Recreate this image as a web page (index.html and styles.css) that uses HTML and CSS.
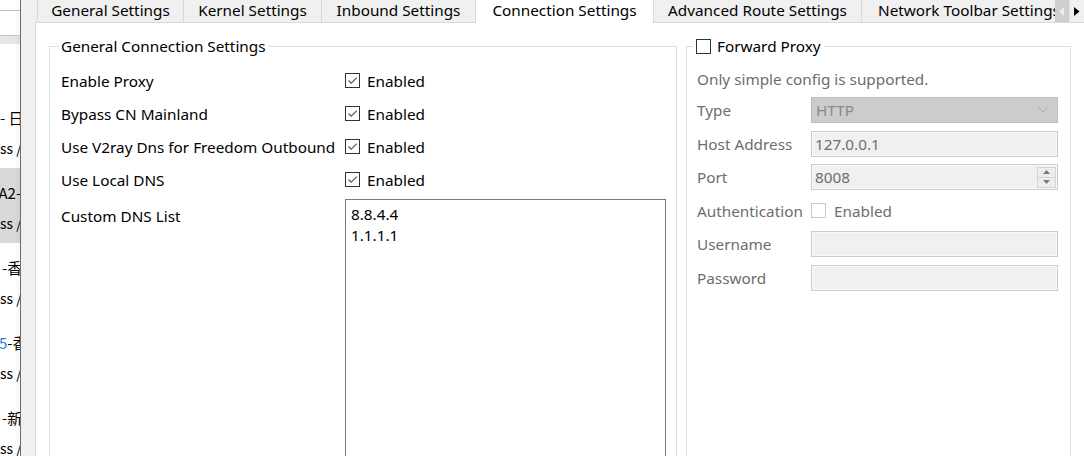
FILE: index.html
```html
<!DOCTYPE html>
<html lang="en">
<head>
<meta charset="utf-8">
<title>Connection Settings</title>
<link rel="stylesheet" href="styles.css">
</head>
<body>
<div class="app">
  <aside class="list">
    <div class="list-top"></div>
    <div class="list-gap"></div>
    <div class="list-head"></div>
    <div class="list-spacer"></div>
    <div class="item"><div class="title t1">JP- 日本</div><div class="sub">vless / tcp</div></div>
    <div class="item selected"><div class="title t2">HKA2-香港</div><div class="sub">vless / tcp</div></div>
    <div class="item"><div class="title t3">-香港</div><div class="sub">vless / tcp</div></div>
    <div class="item"><div class="title t4"><span class="blue">5</span>-香港</div><div class="sub">vless / tcp</div></div>
    <div class="item"><div class="title t3">-新加坡</div><div class="sub">vless / tcp</div></div>
  </aside>
  <div class="splitter"></div>
  <div class="gutter"></div>
  <main class="main">
    <nav class="tabbar">
      <div class="tabs">
        <div class="tab tab-general">General Settings</div>
        <div class="tab tab-kernel">Kernel Settings</div>
        <div class="tab tab-inbound">Inbound Settings</div>
        <div class="tab tab-conn active">Connection Settings</div>
        <div class="tab tab-route">Advanced Route Settings</div>
        <div class="tab tab-toolbar">Network Toolbar Settings</div>
      </div>
      <div class="scroll">
        <span class="arrow arrow-left"><svg width="6" height="9" viewBox="0 0 6 9"><path d="M5 0 L0 4.5 L5 9 Z" fill="#ececec"/></svg></span>
        <span class="arrow arrow-right"><svg width="6" height="9" viewBox="0 0 6 9"><path d="M0 0 L5.5 4.5 L0 9 Z" fill="#000"/></svg></span>
      </div>
    </nav>
    <section class="panel">
      <fieldset class="group group-conn">
        <legend class="legend">General Connection Settings</legend>
        <div class="form">
          <div class="lbl">Enable Proxy</div>
          <div class="ctl"><span class="cb checked"><svg width="13" height="13" viewBox="0 0 13 13"><path d="M2.5 6.5 L5.2 9.2 L10.8 3.6" fill="none" stroke="#555" stroke-width="1.1"/></svg></span>Enabled</div>
          <div class="lbl">Bypass CN Mainland</div>
          <div class="ctl"><span class="cb checked"><svg width="13" height="13" viewBox="0 0 13 13"><path d="M2.5 6.5 L5.2 9.2 L10.8 3.6" fill="none" stroke="#555" stroke-width="1.1"/></svg></span>Enabled</div>
          <div class="lbl">Use V2ray Dns for Freedom Outbound</div>
          <div class="ctl"><span class="cb checked"><svg width="13" height="13" viewBox="0 0 13 13"><path d="M2.5 6.5 L5.2 9.2 L10.8 3.6" fill="none" stroke="#555" stroke-width="1.1"/></svg></span>Enabled</div>
          <div class="lbl">Use Local DNS</div>
          <div class="ctl"><span class="cb checked"><svg width="13" height="13" viewBox="0 0 13 13"><path d="M2.5 6.5 L5.2 9.2 L10.8 3.6" fill="none" stroke="#555" stroke-width="1.1"/></svg></span>Enabled</div>
          <div class="lbl lbl-top">Custom DNS List</div>
          <div class="textarea">8.8.4.4<br>1.1.1.1</div>
        </div>
      </fieldset>
      <fieldset class="group group-proxy">
        <legend class="legend legend-check"><span class="cb"></span>Forward Proxy</legend>
        <div class="note">Only simple config is supported.</div>
        <div class="form2">
          <div class="lbl2">Type</div>
          <div class="combo">HTTP<svg class="chev" width="10" height="6" viewBox="0 0 10 6"><path d="M0.5 0.5 L5 5 L9.5 0.5" fill="none" stroke="#a9a9a9" stroke-width="1"/></svg></div>
          <div class="lbl2">Host Address</div>
          <div class="input">127.0.0.1</div>
          <div class="lbl2">Port</div>
          <div class="input input-spin">8008
            <span class="spin">
              <span class="spin-btn"><svg width="7" height="4" viewBox="0 0 7 4"><path d="M0 4 L3.5 0 L7 4 Z" fill="#7a7a7a"/></svg></span>
              <span class="spin-btn"><svg width="7" height="4" viewBox="0 0 7 4"><path d="M0 0 L3.5 4 L7 0 Z" fill="#7a7a7a"/></svg></span>
            </span>
          </div>
          <div class="lbl2">Authentication</div>
          <div class="ctl2"><span class="cb cb-disabled"></span>Enabled</div>
          <div class="lbl2">Username</div>
          <div class="input"></div>
          <div class="lbl2">Password</div>
          <div class="input"></div>
        </div>
      </fieldset>
    </section>
  </main>
</div>
</body>
</html>
```
FILE: styles.css
```css
* { box-sizing: border-box; }
html, body { margin: 0; padding: 0; }
body {
  width: 1084px;
  height: 456px;
  overflow: hidden;
  background: #f0f0f0;
  font-family: "Noto Sans", "Noto Sans CJK SC", sans-serif;
  font-size: 15.3px;
  color: #000;
}
.app { display: flex; height: 456px; }

/* left list */
.list {
  flex: 0 0 20px;
  background: #fff;
  overflow: hidden;
  display: flex;
  flex-direction: column;
  font-family: "Noto Sans CJK SC", "Noto Sans", sans-serif;
}
.list-top { flex: none; height: 11px; border-bottom: 1px solid #bdbdbd; }
.list-gap { flex: none; height: 24px; }
.list-head { flex: none; height: 9px; background: #e6e6e6; border-top: 1px solid #c6c6c6; }
.list-spacer { flex: none; height: 49px; }
.item { flex: none; height: 75px; padding-top: 15px; white-space: nowrap; }
.item.selected { background: #d9d9d9; }
.title { line-height: 20px; font-size: 15px; }
.t1 { margin-left: -17px; }
.t2 { margin-left: -22px; }
.t3 { margin-left: 2px; }
.t4 { margin-left: -1px; }
.blue { color: #2a7ae2; }
.sub { margin-top: 10px; line-height: 20px; font-size: 14px; margin-left: -19px; }

.splitter {
  flex: 0 0 1px;
  background: #6e6e6e;
  box-shadow: -2px 0 4px rgba(0,0,0,0.14);
}
.gutter { flex: 0 0 14px; background: #f0f0f0; }

/* main */
.main { flex: 1; min-width: 0; display: flex; flex-direction: column; }
.tabbar { flex: none; height: 23px; display: flex; }
.tabs {
  flex: 1;
  min-width: 0;
  display: flex;
  overflow: hidden;
  padding-left: 2px;
  background: linear-gradient(#d9d9d9, #d9d9d9) left bottom / 100% 1px no-repeat;
}
.tab {
  flex: none;
  height: 23px;
  line-height: 21px;
  border-left: 1px solid #d9d9d9;
  text-align: center;
  white-space: nowrap;
}
.tab.active { background: #fff; border-right: 1px solid #d9d9d9; }
.tab.active + .tab { border-left: none; }
.tab-general { width: 146px; }
.tab-kernel { width: 138px; }
.tab-inbound { width: 154px; }
.tab-conn { width: 179px; }
.tab-route { width: 207px; }
.tab-toolbar { width: 215px; text-align: left; padding-left: 16px; }
.scroll {
  flex: 0 0 29px;
  display: flex;
  border-bottom: 1px solid #d9d9d9;
}
.arrow { display: flex; align-items: center; justify-content: center; height: 22px; }
.arrow-left { width: 14px; background: #cfcfcf; }
.arrow-right { width: 15px; background: #f0f0f0; border-left: 1px solid #e2e2e2; }

.panel {
  flex: 1;
  background: #fff;
  border-left: 1px solid #d9d9d9;
  padding: 13px 0 0 13px;
  display: flex;
  gap: 9px;
  overflow: hidden;
}
.group {
  margin: 0;
  border: 1px solid #dcdcdc;
  min-width: 0;
  height: 470px;
  flex: none;
}
.group-conn { width: 628px; padding: 0 10px 0 11px; }
.group-proxy { width: 385px; padding: 0 11px 0 10px; }
.legend {
  line-height: 20px;
  padding: 0 2px;
  margin-left: -2px;
}
.legend-check {
  display: flex;
  align-items: center;
  gap: 6px;
  margin-left: -4px;
  padding: 0 3px;
}
.form {
  display: grid;
  grid-template-columns: 284px 1fr;
  grid-auto-rows: 33px;
  align-items: center;
  padding-top: 8px;
}
.lbl { white-space: nowrap; line-height: 20px; }
.lbl-top { align-self: start; padding-top: 10px; }
.ctl { display: flex; align-items: center; gap: 7px; line-height: 20px; }
.cb {
  flex: none;
  width: 15px;
  height: 15px;
  border: 1px solid #333;
  background: #fff;
  display: inline-flex;
  align-items: center;
  justify-content: center;
}
.cb-disabled { border-color: #c9c9c9; }
.textarea {
  align-self: start;
  margin-top: 3px;
  height: 300px;
  border: 1px solid #7a7a7a;
  padding: 4px 5px;
  line-height: 21px;
}

.note { color: #6d6d6d; line-height: 20px; padding-top: 13px; margin-bottom: 8px; white-space: nowrap; }
.form2 {
  display: grid;
  grid-template-columns: 114px 247px;
  grid-auto-rows: 26px;
  row-gap: 7.5px;
  align-items: center;
  color: #6d6d6d;
}
.lbl2 { white-space: nowrap; line-height: 20px; }
.combo {
  height: 26px;
  background: #cccccc;
  border: 1px solid #bdbdbd;
  color: #8a8a8a;
  padding: 0 4px;
  line-height: 24px;
  display: flex;
  justify-content: space-between;
  align-items: center;
}
.chev { margin-right: 5px; }
.input {
  height: 26px;
  background: #f0f0f0;
  border: 1px solid #cccccc;
  box-shadow: inset 0 0 0 1px #f9f9f9;
  padding: 0 3px;
  line-height: 24px;
  color: #6d6d6d;
}
.input-spin { display: flex; justify-content: space-between; align-items: center; padding-right: 1px; }
.spin {
  display: flex;
  flex-direction: column;
  width: 19px;
  height: 21px;
  border: 1px solid #d4d4d4;
  background: #ededed;
}
.spin-btn { flex: 1; display: flex; align-items: center; justify-content: center; }
.spin-btn + .spin-btn { border-top: 1px solid #d4d4d4; }
.ctl2 { display: flex; align-items: center; gap: 8px; line-height: 20px; }
```
